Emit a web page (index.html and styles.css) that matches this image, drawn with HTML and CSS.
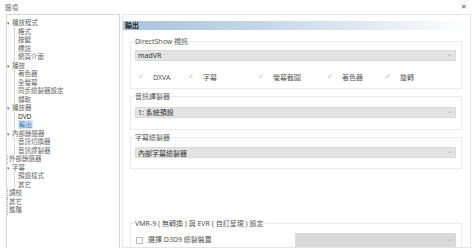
FILE: index.html
```html
<!DOCTYPE html>
<html lang="zh-Hant">
<head>
<meta charset="utf-8">
<link rel="stylesheet" href="styles.css">
</head>
<body>
<div class="titlebar">
  <span class="title">選項</span>
  <span class="close">✕</span>
</div>
<div class="main">
  <div class="tree">
    <div class="node"><span class="arrow">▾</span>播放程式</div>
    <div class="kids">
      <div class="leaf">格式</div>
      <div class="leaf">按鍵</div>
      <div class="leaf">標誌</div>
      <div class="leaf">網頁介面</div>
    </div>
    <div class="node"><span class="arrow">▾</span>播放</div>
    <div class="kids">
      <div class="leaf">著色器</div>
      <div class="leaf">全螢幕</div>
      <div class="leaf">同步繪製器設定</div>
      <div class="leaf">擷取</div>
    </div>
    <div class="node"><span class="arrow">▾</span>播放器</div>
    <div class="kids">
      <div class="leaf dvd">DVD</div>
      <div class="leaf"><span class="sel">輸出</span></div>
    </div>
    <div class="node"><span class="arrow">▾</span>內部篩選器</div>
    <div class="kids">
      <div class="leaf">音訊切換器</div>
      <div class="leaf">音訊譯製器</div>
    </div>
    <div class="topleaf">外部篩選器</div>
    <div class="node"><span class="arrow">▾</span>字幕</div>
    <div class="kids">
      <div class="leaf">預設樣式</div>
      <div class="leaf">其它</div>
    </div>
    <div class="topleaf">調校</div>
    <div class="topleaf">其它</div>
    <div class="topleaf">進階</div>
  </div>
  <div class="panel">
    <div class="header">輸出</div>
    <fieldset class="group g1">
      <legend>DirectShow 視訊</legend>
      <div class="combo"><span>madVR</span><span class="chev">⌄</span></div>
      <div class="checks">
        <div class="chk"><span class="tick">✓</span>DXVA</div>
        <div class="chk"><span class="tick">✓</span>字幕</div>
        <div class="chk"><span class="tick">✓</span>螢幕截圖</div>
        <div class="chk"><span class="tick">✓</span>著色器</div>
        <div class="chk"><span class="tick">✓</span>旋轉</div>
      </div>
    </fieldset>
    <fieldset class="group g2">
      <legend>音訊譯製器</legend>
      <div class="combo"><span>1: 系統預設</span><span class="chev">⌄</span></div>
    </fieldset>
    <fieldset class="group g3">
      <legend>字幕繪製器</legend>
      <div class="combo"><span>內部字幕繪製器</span><span class="chev">⌄</span></div>
    </fieldset>
    <fieldset class="group g4">
      <legend>VMR-9 ( 無轉換 ) 與 EVR ( 自訂呈現 ) 設定</legend>
      <div class="vmrrow">
        <div class="cb"><span class="box"></span>選擇 D3D9 繪製裝置</div>
        <div class="combo small"><span></span><span class="chev">⌄</span></div>
      </div>
    </fieldset>
  </div>
</div>
</body>
</html>
```
FILE: styles.css
```css
* { box-sizing: border-box; }
html, body { margin: 0; padding: 0; }
body {
  width: 474px;
  height: 248px;
  overflow: hidden;
  background: #ffffff;
  font-family: "Noto Sans", "Noto Sans CJK TC", sans-serif;
  font-size: 7px;
  color: #555;
}
.titlebar {
  height: 14px;
  display: flex;
  align-items: center;
  justify-content: space-between;
  padding: 0 7px 1px 5px;
}
.title { color: #666; font-size: 6.5px; }
.close { color: #555; font-size: 7px; }
.main {
  display: flex;
  gap: 2px;
  padding-left: 6px;
  height: 234px;
}
.tree {
  width: 114px;
  height: 240px;
  border: 1px solid #d6d6d6;
  padding-top: 4px;
  font-size: 6.5px;
  line-height: 8.5px;
  color: #666;
}
.node, .leaf, .topleaf { height: 8.5px; white-space: nowrap; }
.arrow {
  display: inline-block;
  width: 5px;
  font-size: 5px;
  color: #777;
}
.kids {
  margin-left: 7px;
  border-left: 1px dotted #bbb;
}
.leaf { padding-left: 3px; }
.topleaf {
  padding-left: 1px;
  border-left: 1px dotted #bbb;
}
.dvd { color: #333; }
.sel {
  background: #d5e8fa;
  color: #3a6ea8;
  padding: 0 1px;
}
.panel {
  width: 349px;
  border: 1px solid #e6e6e6;
  padding-top: 6px;
}
.header {
  height: 9px;
  margin-right: 4px;
  background: linear-gradient(to right, #a9c2dd 0%, #c5d6e8 40%, #eef3f8 85%, #ffffff 100%);
  font-weight: bold;
  color: #222;
  font-size: 7px;
  line-height: 9px;
  padding-left: 2px;
}
.group {
  margin: 0 8px 0 7px;
  border: 1px solid #ebebeb;
  padding: 0 5px 0 4px;
  min-width: 0;
}
.group legend {
  padding: 0;
  line-height: 9px;
  font-size: 7px;
  color: #555;
}
.g1 { margin-top: 6.5px; padding-bottom: 6px; }
.g2 { margin-top: 3px; padding-bottom: 11px; }
.g3 { margin-top: 3px; padding-bottom: 10px; }
.g4 { margin-top: 50px; padding-bottom: 4px; }
.combo {
  height: 11px;
  background: #e3e3e3;
  border: 1px solid #dadada;
  display: flex;
  align-items: center;
  justify-content: space-between;
  padding: 0 3px 0 2px;
  color: #333;
  font-size: 7px;
}
.g1 .combo { margin-top: 4.5px; }
.g2 .combo { margin-top: 5.5px; }
.g3 .combo { margin-top: 5.5px; }
.chev { color: #999; font-size: 6px; line-height: 6px; margin-top: -3px; }
.checks {
  display: grid;
  grid-template-columns: 50px 70px 69px 58px 1fr;
  height: 10px;
  margin-top: 11px;
  padding-left: 4px;
  align-items: center;
  color: #555;
}
.chk { display: flex; align-items: center; white-space: nowrap; }
.tick {
  display: inline-block;
  width: 14px;
  color: #4c9a4c;
  font-size: 5px;
  transform: translateY(-2px);
}
.vmrrow {
  display: flex;
  justify-content: space-between;
  align-items: flex-start;
  margin-top: 5px;
}
.cb {
  display: flex;
  align-items: center;
  margin-top: 3px;
  margin-left: 1px;
  white-space: nowrap;
  color: #555;
  line-height: 8px;
}
.box {
  width: 7px;
  height: 7px;
  border: 1px solid #bdbdbd;
  background: #fff;
  margin-right: 5px;
}
.combo.small { width: 161px; height: 14px; background: #d9d9d9; }
```
